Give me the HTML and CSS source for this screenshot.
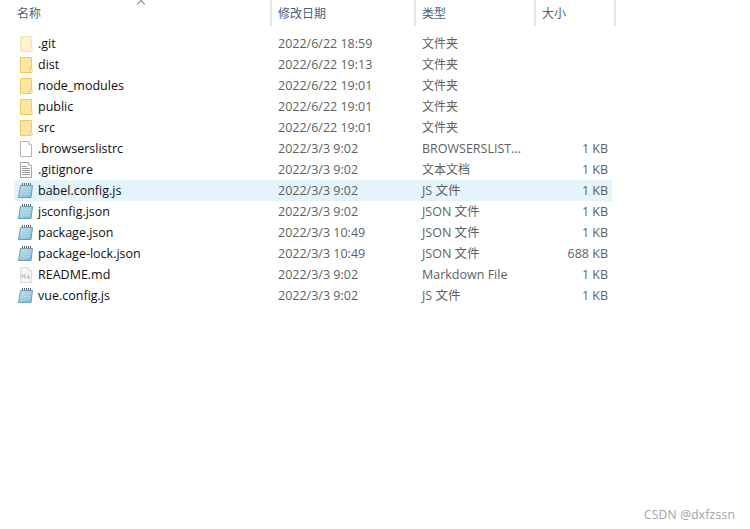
FILE: index.html
```html
<!DOCTYPE html>
<html lang="zh-CN">
<head>
  <meta charset="UTF-8" />
  <title>文件列表</title>
  <link rel="stylesheet" href="styles.css">
</head>
<body>
  <svg class="defs" width="0" height="0">
    <linearGradient id="script-fill" x1="0" y1="0" x2="1" y2="1">
      <stop offset="0" stop-color="#c4e4f0"/>
      <stop offset="1" stop-color="#7fb9d0"/>
    </linearGradient>
    <symbol id="folder" viewBox="0 0 16 16">
      <path d="M2.500.5h11v15h-11z" fill="#fde6a0" stroke="#f0cb5c"/>
      <path d="M11.500 15.500v-4h2.500v4z" fill="#fff3cc" stroke="#f0cb5c"/>
    </symbol>
    <symbol id="blank" viewBox="0 0 16 16">
      <path d="M2.500.5h8l3 3v12h-11z" fill="#fff" stroke="#b4b4b4"/>
      <path d="M10.500.5v3h3" fill="#f2f2f2" stroke="#cacaca"/>
    </symbol>
    <symbol id="text" viewBox="0 0 16 16">
      <path d="M2.500.5h8l3 3v12h-11z" fill="#fff" stroke="#a4a4a4"/>
      <path d="M10.500.5v3h3" fill="#eee" stroke="#bcbcbc"/>
      <path d="M4 4.500h5M4 6.500h8M4 8.500h8M4 10.500h8M4 12.500h8" stroke="#969696"/>
    </symbol>
    <symbol id="script" viewBox="0 0 16 16">
      <path d="M2.500 2.500h12l-1.500 12h-12.500z" fill="url(#script-fill)" stroke="#6a9fb5"/>
      <path d="M4 1h10" stroke="#666" stroke-dasharray="1 1" stroke-width="2"/>
      <path d="M6 6h7M5.500 8.500h7M5 11h7" stroke="#b4d8e6"/>
    </symbol>
    <symbol id="markdown" viewBox="0 0 16 16">
      <path d="M2.500.5h8l3 3v12h-11z" fill="#f6f6f6" stroke="#dadada"/>
      <path d="M10.500.5v3h3" fill="#fff" stroke="#dadada"/>
      <path d="M4 11.500v-4l1.500 2 1.500-2v4M10.500 7.500v4M9 10l1.500 1.500 1.500-1.500" fill="none" stroke="#b4b4b4"/>
    </symbol>
  </svg>

  <div class="explorer">
    <div class="header">
      <div class="col-name">名称<span class="sort-arrow"></span></div>
      <div class="col-date">修改日期</div>
      <div class="col-type">类型</div>
      <div class="col-size">大小</div>
    </div>

    <div class="rows">
      <div class="row hidden-item">
        <svg class="icon"><use href="#folder"/></svg>
        <span class="name">.git</span><span class="date">2022/6/22 18:59</span><span class="type type-zh">文件夹</span><span class="size"></span>
      </div>
      <div class="row">
        <svg class="icon"><use href="#folder"/></svg>
        <span class="name">dist</span><span class="date">2022/6/22 19:13</span><span class="type type-zh">文件夹</span><span class="size"></span>
      </div>
      <div class="row">
        <svg class="icon"><use href="#folder"/></svg>
        <span class="name">node_modules</span><span class="date">2022/6/22 19:01</span><span class="type type-zh">文件夹</span><span class="size"></span>
      </div>
      <div class="row">
        <svg class="icon"><use href="#folder"/></svg>
        <span class="name">public</span><span class="date">2022/6/22 19:01</span><span class="type type-zh">文件夹</span><span class="size"></span>
      </div>
      <div class="row">
        <svg class="icon"><use href="#folder"/></svg>
        <span class="name">src</span><span class="date">2022/6/22 19:01</span><span class="type type-zh">文件夹</span><span class="size"></span>
      </div>
      <div class="row">
        <svg class="icon"><use href="#blank"/></svg>
        <span class="name">.browserslistrc</span><span class="date">2022/3/3 9:02</span><span class="type">BROWSERSLIST...</span><span class="size">1 KB</span>
      </div>
      <div class="row">
        <svg class="icon"><use href="#text"/></svg>
        <span class="name">.gitignore</span><span class="date">2022/3/3 9:02</span><span class="type type-zh">文本文档</span><span class="size">1 KB</span>
      </div>
      <div class="row selected">
        <svg class="icon"><use href="#script"/></svg>
        <span class="name">babel.config.js</span><span class="date">2022/3/3 9:02</span><span class="type">JS 文件</span><span class="size">1 KB</span>
      </div>
      <div class="row">
        <svg class="icon"><use href="#script"/></svg>
        <span class="name">jsconfig.json</span><span class="date">2022/3/3 9:02</span><span class="type">JSON 文件</span><span class="size">1 KB</span>
      </div>
      <div class="row">
        <svg class="icon"><use href="#script"/></svg>
        <span class="name">package.json</span><span class="date">2022/3/3 10:49</span><span class="type">JSON 文件</span><span class="size">1 KB</span>
      </div>
      <div class="row">
        <svg class="icon"><use href="#script"/></svg>
        <span class="name">package-lock.json</span><span class="date">2022/3/3 10:49</span><span class="type">JSON 文件</span><span class="size">688 KB</span>
      </div>
      <div class="row">
        <svg class="icon"><use href="#markdown"/></svg>
        <span class="name">README.md</span><span class="date">2022/3/3 9:02</span><span class="type">Markdown File</span><span class="size">1 KB</span>
      </div>
      <div class="row">
        <svg class="icon"><use href="#script"/></svg>
        <span class="name">vue.config.js</span><span class="date">2022/3/3 9:02</span><span class="type">JS 文件</span><span class="size">1 KB</span>
      </div>
    </div>
  </div>

  <div class="watermark">CSDN @dxfzssn</div>
</body>
</html>
```

FILE: styles.css
```css
* {
  margin: 0;
  padding: 0;
  box-sizing: border-box;
}

body {
  width: 750px;
  height: 529px;
  overflow: hidden;
  background: white;
  font-family: "Open Sans", "Noto Sans CJK SC", sans-serif;
  font-size: 12px;
  position: relative;
}

.defs {
  position: absolute;
}

.header {
  display: flex;
  width: 616px;
  height: 26px;
  color: #4c607a;
  line-height: 28px;
}

.header > div {
  border-right: 2px solid #e5e5e5;
  padding-left: 6px;
}

.col-name {
  width: 272px;
  padding-left: 17px !important;
  position: relative;
}

.col-date {
  width: 144px;
}

.col-type {
  width: 120px;
}

.col-size {
  width: 80px;
}

.sort-arrow {
  position: absolute;
  left: 138px;
  top: 1px;
  width: 6px;
  height: 6px;
  border-left: 1px solid #888;
  border-top: 1px solid #888;
  transform: rotate(45deg);
}

.rows {
  margin-top: 7px;
  margin-left: 14px;
  width: 598px;
  font-size: 12.5px;
}

.row {
  display: grid;
  grid-template-columns: 24px 240px 144px 120px 66px;
  align-items: center;
  height: 21px;
  line-height: 21px;
  color: #5f5f5f;
}

.selected {
  background: #e5f3fb;
}

.icon {
  width: 16px;
  height: 16px;
  margin-left: 4px;
}

.hidden-item .icon {
  opacity: 0.5;
}

.name {
  color: #111;
}

.type-zh {
  font-size: 12px;
}

.size {
  text-align: right;
}

.watermark {
  position: absolute;
  right: 15px;
  bottom: 6px;
  color: #a3a3a3;
  font-size: 12px;
  letter-spacing: 0.25px;
}
```
